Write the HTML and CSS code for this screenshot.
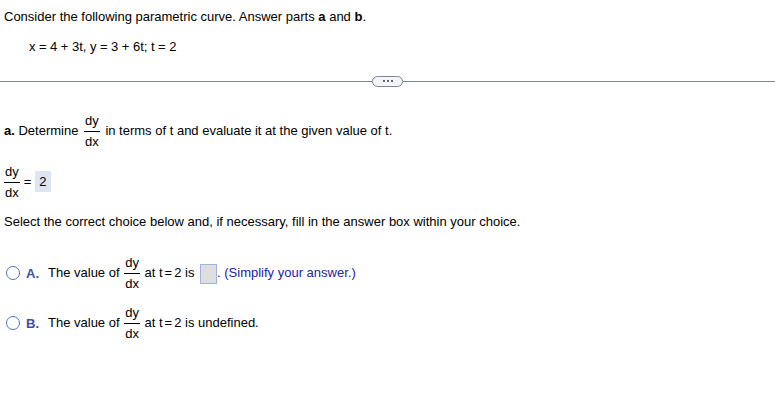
FILE: index.html
```html
<!DOCTYPE html>
<html>
<head>
<meta charset="utf-8">
<link rel="stylesheet" href="styles.css">
</head>
<body>
<div class="page">
  <div class="intro">
    <p class="line">Consider the following parametric curve. Answer parts <b>a</b> and <b>b</b>.</p>
    <p class="line eq">x<span class="op">=</span>4<span class="op">+</span>3t, y<span class="op">=</span>3<span class="op">+</span>6t; t<span class="op">=</span>2</p>
  </div>

  <div class="divider">
    <span class="rule"></span>
    <span class="pill"><i></i><i></i><i></i></span>
    <span class="rule"></span>
  </div>

  <p class="row part-a"><b>a.</b> Determine <span class="frac"><span class="num">dy</span><span class="bar"></span><span class="den">dx</span></span> in terms of t and evaluate it at the given value of t.</p>

  <p class="row answer"><span class="frac"><span class="num">dy</span><span class="bar"></span><span class="den">dx</span></span><span class="op">=</span><span class="filled">2</span></p>

  <p class="row select">Select the correct choice below and, if necessary, fill in the answer box within your choice.</p>

  <div class="choices">
    <div class="choice">
      <span class="radio"></span><b class="letter">A.</b>
      <span class="ctext">The value of <span class="frac"><span class="num">dy</span><span class="bar"></span><span class="den">dx</span></span> at t<span class="op">=</span>2 is <span class="box"></span><span class="hint">. (Simplify your answer.)</span></span>
    </div>
    <div class="choice">
      <span class="radio"></span><b class="letter">B.</b>
      <span class="ctext">The value of <span class="frac"><span class="num">dy</span><span class="bar"></span><span class="den">dx</span></span> at t<span class="op">=</span>2 is undefined.</span>
    </div>
  </div>
</div>
</body>
</html>
```

FILE: styles.css
```css
html, body {
  margin: 0;
  padding: 0;
  background: #ffffff;
}

body {
  font-family: "Liberation Sans", Arial, sans-serif;
  font-size: 13px;
  color: #000000;
}

.page {
  width: 775px;
}

p {
  margin: 0;
}

.intro {
  padding: 9px 4px 0 4px;
}

.line {
  line-height: 15px;
}

.eq {
  margin-top: 15px;
  padding-left: 25px;
}

.op {
  margin: 0 2px;
}

.eq .op {
  margin: 0 3.5px;
}

.divider {
  display: flex;
  align-items: center;
  margin-top: 21px;
  height: 12px;
}

.rule {
  flex: 1;
  height: 1px;
  background: #7e8590;
}

.pill {
  display: flex;
  align-items: center;
  justify-content: center;
  gap: 2px;
  width: 29px;
  height: 9px;
  border: 1px solid #7e8590;
  border-radius: 6px;
  background: #f4f5f8;
}

.pill i {
  display: block;
  width: 2px;
  height: 2px;
  background: #5d6573;
}

.row {
  padding-left: 4px;
  line-height: 15px;
}

.part-a {
  margin-top: 27px;
}

.frac {
  display: inline-block;
  vertical-align: -11px;
  text-align: center;
  line-height: 13px;
  margin: 0 1px;
}

.part-a .frac {
  margin: 0 2px;
}

.frac .num {
  display: block;
  padding: 0 1px 4px;
}

.frac .bar {
  display: block;
  height: 1px;
  background: #000000;
}

.frac .den {
  display: block;
  padding: 3px 1px 0;
}

.answer {
  margin-top: 17px;
}

.answer .frac {
  margin-left: 0;
}

.answer .op {
  margin: 0 4px 0 3px;
}

.filled {
  display: inline-block;
  background: #dce5f1;
  padding: 3px 4px;
  line-height: 15px;
}

.select {
  margin-top: 15px;
}

.choices {
  margin-top: 26px;
}

.choice {
  display: flex;
  align-items: center;
  padding-left: 6px;
  height: 36px;
  margin-bottom: 14px;
}

.radio {
  box-sizing: border-box;
  width: 14px;
  height: 14px;
  border: 1px solid #4f74c4;
  border-radius: 50%;
  margin-right: 6px;
  background: #fff;
}

.letter {
  color: #3f4fa8;
  width: 22px;
}

.ctext {
  line-height: 15px;
}

.box {
  display: inline-block;
  box-sizing: border-box;
  width: 17px;
  height: 20px;
  border: 1px solid #9fb4dc;
  background: #dedede;
  vertical-align: middle;
  margin-left: 2px;
}

.hint {
  color: #2222aa;
}
```
